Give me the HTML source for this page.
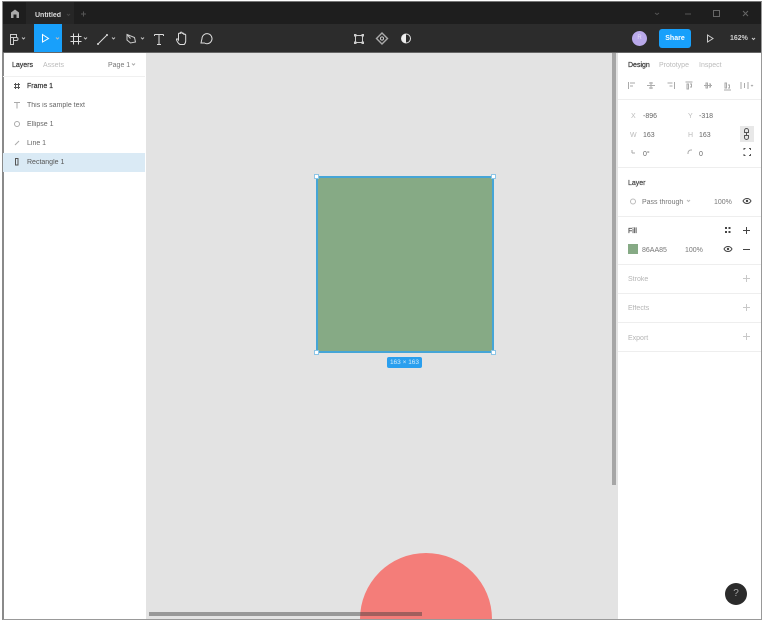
<!DOCTYPE html>
<html><head><meta charset="utf-8"><style>
html,body{margin:0;padding:0;background:#fff;overflow:hidden}
body{width:768px;height:622px;position:relative;font-family:"Liberation Sans",sans-serif}
.a{position:absolute}
.t{position:absolute;font-size:7px;line-height:10px;margin-top:1px;white-space:nowrap;color:#555;filter:blur(.35px)}
.g{color:#aaa}.d{color:#333}.b{font-weight:bold}
svg{position:absolute;overflow:visible;fill:none}
</style></head><body>
<div class="a" style="left:2px;top:1px;width:760px;height:619px;box-sizing:border-box;border:1px solid #999;border-top:1px solid #777;border-left:2px solid #8a8a8a;background:#fff"></div>
<div class="a" style="left:3px;top:2px;width:758px;height:22px;background:#1e1e1e"></div>
<div class="a" style="left:26px;top:2px;width:48px;height:22px;background:#262626"></div>
<div class="a" style="left:3px;top:24px;width:758px;height:28px;background:#2c2c2c"></div>
<div class="a" style="left:3px;top:52px;width:758px;height:1px;background:#666"></div>
<div class="a" style="left:34px;top:24px;width:28px;height:28px;background:#18a0fb"></div>

<svg style="left:0;top:0" width="768" height="60" stroke="#bbb" stroke-width="1">
<path d="M11 18V12.500L15 9.500L19 12.500V18H16.500V14.500H13.500V18Z" fill="#aaa" stroke="none"/>
<path d="M81 14h5M83.500 11.500v5" stroke="#555"/>
<path d="M67 14l1.500 1.500 1.500-1.500" stroke="#444"/>
<path d="M655 13l2 1.500 2-1.500M685 14h6" stroke="#555"/><rect x="713.500" y="10.500" width="6" height="6" stroke="#666"/><path d="M743 11l5 5M748 11l-5 5" stroke="#666"/>
<path d="M10.500 34.500h6v3h-6zM10.500 37.500h3v7h-3zM13.500 37.500h3a1.500 1.500 0 0 1 0 3h-3" stroke="#ccc"/>
<path d="M22 37.500l1.500 1.500 1.500-1.500M56 37.500l1.500 1.500 1.500-1.500M84 37.500l1.500 1.500 1.500-1.500M112 37.500l1.500 1.500 1.500-1.500M141 37.500l1.500 1.500 1.500-1.500" stroke="#bbb"/>
<path d="M42.500 34.500v7.500l6-3.500z" stroke="#fff"/>
<path d="M73.500 33.500v11M78.500 33.500v11M70.500 36.500h11M70.500 41.500h11" stroke="#ddd"/>
<path d="M98.500 43.500l8-8" stroke="#ddd"/><circle cx="98" cy="44" r="1" fill="#ddd" stroke="none"/><circle cx="107" cy="35" r="1" fill="#ddd" stroke="none"/>
<path d="M127 34.500l7.500 3 1 4.500-5 1-3.500-3z" stroke="#ccc"/><path d="M127 34.500l3.500 4" stroke="#ccc"/>
<path d="M154.500 34.500h9M159 34.500v10M157 44.500h4M154.500 34.500v1.500M163.500 34.500v1.500" stroke="#ddd"/>
<path d="M180 44.500c-2-1-3.500-4-3.500-5s1-1 2 .5v-6a.9.9 0 0 1 1.800 0v-1a.9.9 0 0 1 1.800 0v1a.9.9 0 0 1 1.800 0v1a.9.9 0 0 1 1.800 0v6c0 2-1 3-1.500 3.500z" stroke="#ddd"/>
<path d="M202 38.500a5 5 0 1 1 2.500 4.500h-3.500z" stroke="#ddd"/>
<path d="M355.500 35.500h7v7h-7z" stroke="#ccc"/><rect x="354" y="34" width="2.500" height="2.500" fill="#ccc" stroke="none"/><rect x="361.500" y="34" width="2.500" height="2.500" fill="#ccc" stroke="none"/><rect x="354" y="41.500" width="2.500" height="2.500" fill="#ccc" stroke="none"/><rect x="361.500" y="41.500" width="2.500" height="2.500" fill="#ccc" stroke="none"/>
<path d="M382 33l5.500 5.500-5.500 5.500-5.500-5.500z" stroke="#aaa" stroke-width="1.400"/><circle cx="382" cy="38.500" r="1.600" stroke="#ccc"/>
<circle cx="406" cy="38.500" r="4.500" stroke="#ddd"/><path d="M406 34a4.500 4.500 0 0 0 0 9z" fill="#eee" stroke="none"/>
<path d="M707.500 35v7l5.500-3.500z" stroke="#ccc"/><path d="M752 38l1.500 1.500 1.500-1.500" stroke="#ccc"/>
</svg>
<div class="t b" style="left:35px;top:10px;color:#ddd;font-size:7px">Untitled</div>
<div class="a" style="left:632px;top:31px;width:15px;height:15px;border-radius:50%;background:#b9a9ea;color:#e4dcf8;font-size:6px;line-height:15px;text-align:center">R</div>
<div class="a" style="left:659px;top:29px;width:32px;height:19px;border-radius:3px;background:#18a0fb;color:#fff;font-size:7px;font-weight:bold;line-height:19px;text-align:center">Share</div>
<div class="t b" style="left:730px;top:33px;color:#ccc;font-size:7px">162%</div>

<div class="a" style="left:146px;top:53px;width:472px;height:566px;background:#e3e3e3;overflow:hidden">
 <div class="a" style="left:214px;top:500px;width:132px;height:66px;border-radius:66px 66px 0 0;background:#f47d79"></div>
 <div class="a" style="left:466px;top:0;width:4px;height:432px;background:#a6a6a6"></div>
 <div class="a" style="left:3px;top:559px;width:273px;height:4px;background:rgba(60,60,60,.45)"></div>
</div>
<div class="a" style="left:316px;top:176px;width:178px;height:177px;box-sizing:border-box;background:#86aa85;border:2px solid #45a5d6"></div>
<div class="a" style="left:314px;top:174px;width:5px;height:5px;background:#fff;border:1px solid #8cc5e6;box-sizing:border-box"></div>
<div class="a" style="left:491px;top:174px;width:5px;height:5px;background:#fff;border:1px solid #8cc5e6;box-sizing:border-box"></div>
<div class="a" style="left:314px;top:350px;width:5px;height:5px;background:#fff;border:1px solid #8cc5e6;box-sizing:border-box"></div>
<div class="a" style="left:491px;top:350px;width:5px;height:5px;background:#fff;border:1px solid #8cc5e6;box-sizing:border-box"></div>
<div class="a" style="left:387px;top:357px;width:35px;height:11px;border-radius:2px;background:#2a9fee;color:#d5edfc;font-size:6.500px;line-height:11px;text-align:center">163 × 163</div>

<div class="a" style="left:3px;top:76px;width:142px;height:1px;background:#f0f0f0"></div>
<div class="a" style="left:3px;top:153px;width:142px;height:19px;background:#daeaf5"></div>
<div class="t d" style="left:12px;top:60px;-webkit-text-stroke:.2px #333">Layers</div>
<div class="t g" style="left:43px;top:60px;color:#bbb">Assets</div>
<div class="t" style="left:108px;top:60px;color:#777">Page 1</div>
<div class="t" style="left:27px;top:81px;color:#333;-webkit-text-stroke:.2px #333">Frame 1</div>
<div class="t" style="left:27px;top:100px;color:#666">This is sample text</div>
<div class="t" style="left:27px;top:119px;color:#666">Ellipse 1</div>
<div class="t" style="left:27px;top:138px;color:#666">Line 1</div>
<div class="t" style="left:27px;top:157px;color:#555">Rectangle 1</div>
<svg style="left:0;top:0" width="150" height="175" stroke="#888">
<path d="M132 63.500l1.500 1.500 1.500-1.500" stroke="#aaa"/>
<path d="M15.500 83v6M18.500 83v6M14 84.500h6M14 87.500h6" stroke="#555"/>
<path d="M14 102.500h6M17 102.500v6" stroke="#aaa"/>
<circle cx="17" cy="124" r="2.500" stroke="#aaa"/>
<path d="M15 145l4-4" stroke="#aaa"/>
<rect x="15.500" y="158.500" width="2.500" height="6.500" stroke="#555"/>
</svg>

<div class="t d" style="left:628px;top:60px;-webkit-text-stroke:.2px #333">Design</div>
<div class="t" style="left:659px;top:60px;color:#bbb">Prototype</div>
<div class="t" style="left:699px;top:60px;color:#bbb">Inspect</div>
<div class="a" style="left:618px;top:99px;width:143px;height:1px;background:#eee"></div>
<div class="a" style="left:618px;top:167px;width:143px;height:1px;background:#eee"></div>
<div class="a" style="left:618px;top:216px;width:143px;height:1px;background:#eee"></div>
<div class="a" style="left:618px;top:264px;width:143px;height:1px;background:#eee"></div>
<div class="a" style="left:618px;top:293px;width:143px;height:1px;background:#eee"></div>
<div class="a" style="left:618px;top:322px;width:143px;height:1px;background:#eee"></div>
<div class="a" style="left:618px;top:351px;width:143px;height:1px;background:#eee"></div>
<div class="a" style="left:740px;top:126px;width:14px;height:16px;background:#e8e8e8"></div>
<div class="t" style="left:631px;top:111px;color:#bbb">X</div><div class="t" style="left:643px;top:111px;color:#666">-896</div>
<div class="t" style="left:688px;top:111px;color:#bbb">Y</div><div class="t" style="left:699px;top:111px;color:#666">-318</div>
<div class="t" style="left:630px;top:130px;color:#bbb">W</div><div class="t" style="left:643px;top:130px;color:#666">163</div>
<div class="t" style="left:688px;top:130px;color:#bbb">H</div><div class="t" style="left:699px;top:130px;color:#666">163</div>
<div class="t" style="left:643px;top:149px;color:#666">0°</div>
<div class="t" style="left:699px;top:149px;color:#666">0</div>
<div class="t" style="left:628px;top:178px;color:#444;-webkit-text-stroke:.2px #444">Layer</div>
<div class="t" style="left:642px;top:197px;color:#777">Pass through</div>
<div class="t" style="left:714px;top:197px;color:#777">100%</div>
<div class="t" style="left:628px;top:226px;color:#444;-webkit-text-stroke:.2px #444">Fill</div>
<div class="a" style="left:628px;top:244px;width:10px;height:10px;background:#86aa85"></div>
<div class="t" style="left:642px;top:245px;color:#777">86AA85</div>
<div class="t" style="left:685px;top:245px;color:#777">100%</div>
<div class="t" style="left:628px;top:274px;color:#b5b5b5">Stroke</div>
<div class="t" style="left:628px;top:303px;color:#b5b5b5">Effects</div>
<div class="t" style="left:628px;top:333px;color:#b5b5b5">Export</div>
<svg style="left:0;top:0" width="768" height="360" stroke="#aaa">
<path d="M628.500 82v7M630 83h5M630 86h3M647 85.500h8M649 83h4M649 88h4M651 82v7M667.500 83h5M669.500 86h3M674.500 82v7M685.500 82h7M687 84h1.500v5H687zM690 84h1.500v3H690M704 85.500h8M706 83h1.500v5H706zM709 84h1.500v3H709M724 90h7M725 83h1.500v5H725zM728 85h1.500v3H728M741 82v7M748 82v7M744.500 83v5M751 85l1 1 1-1"/>
<path d="M632 153v-3M632 153h3"/><path d="M688 154v-1a3 3 0 0 1 3-3h1"/>
<path d="M744.500 130.500a2 2 0 0 1 4 0v2h-4zM744.500 135.500h4v2a2 2 0 0 1-4 0zM746.500 132v4" stroke="#555"/>
<path d="M744 150v-1.500h1.500M749 148.500h1.500v1.500M744 154v1.500h1.500M750.500 154v1.500H749" stroke="#555"/>
<circle cx="633" cy="201.500" r="2.500" stroke="#bbb"/><path d="M687 200l1.500 1.500 1.500-1.500" stroke="#bbb"/>
<path d="M743 201c1-1.800 2.300-2.500 4-2.500s3 .7 4 2.500c-1 1.800-2.300 2.500-4 2.500s-3-.7-4-2.500z" stroke="#444"/><circle cx="747" cy="201" r="1.200" fill="#444" stroke="none"/>
<path d="M724 249c1-1.800 2.300-2.500 4-2.500s3 .7 4 2.500c-1 1.800-2.300 2.500-4 2.500s-3-.7-4-2.500z" stroke="#444"/><circle cx="728" cy="249" r="1.200" fill="#444" stroke="none"/>
<path d="M743 249.500h7" stroke="#444"/>
<path d="M743 230.500h7M746.500 227v7" stroke="#444"/>
<rect x="725" y="227" width="2" height="2" fill="#444" stroke="none"/><rect x="728.500" y="227" width="2" height="2" fill="#444" stroke="none"/><rect x="725" y="231" width="2" height="2" fill="#444" stroke="none"/><rect x="728.500" y="231" width="2" height="2" fill="#444" stroke="none"/>
<path d="M743 278.500h7M746.500 275v7M743 307.500h7M746.500 304v7M743 336.500h7M746.500 333v7" stroke="#c8c8c8"/>
</svg>
<div class="a" style="left:725px;top:583px;width:22px;height:22px;border-radius:50%;background:#2b2b2b;color:#aaa;font-size:10px;line-height:22px;text-align:center">?</div>
</body></html>
